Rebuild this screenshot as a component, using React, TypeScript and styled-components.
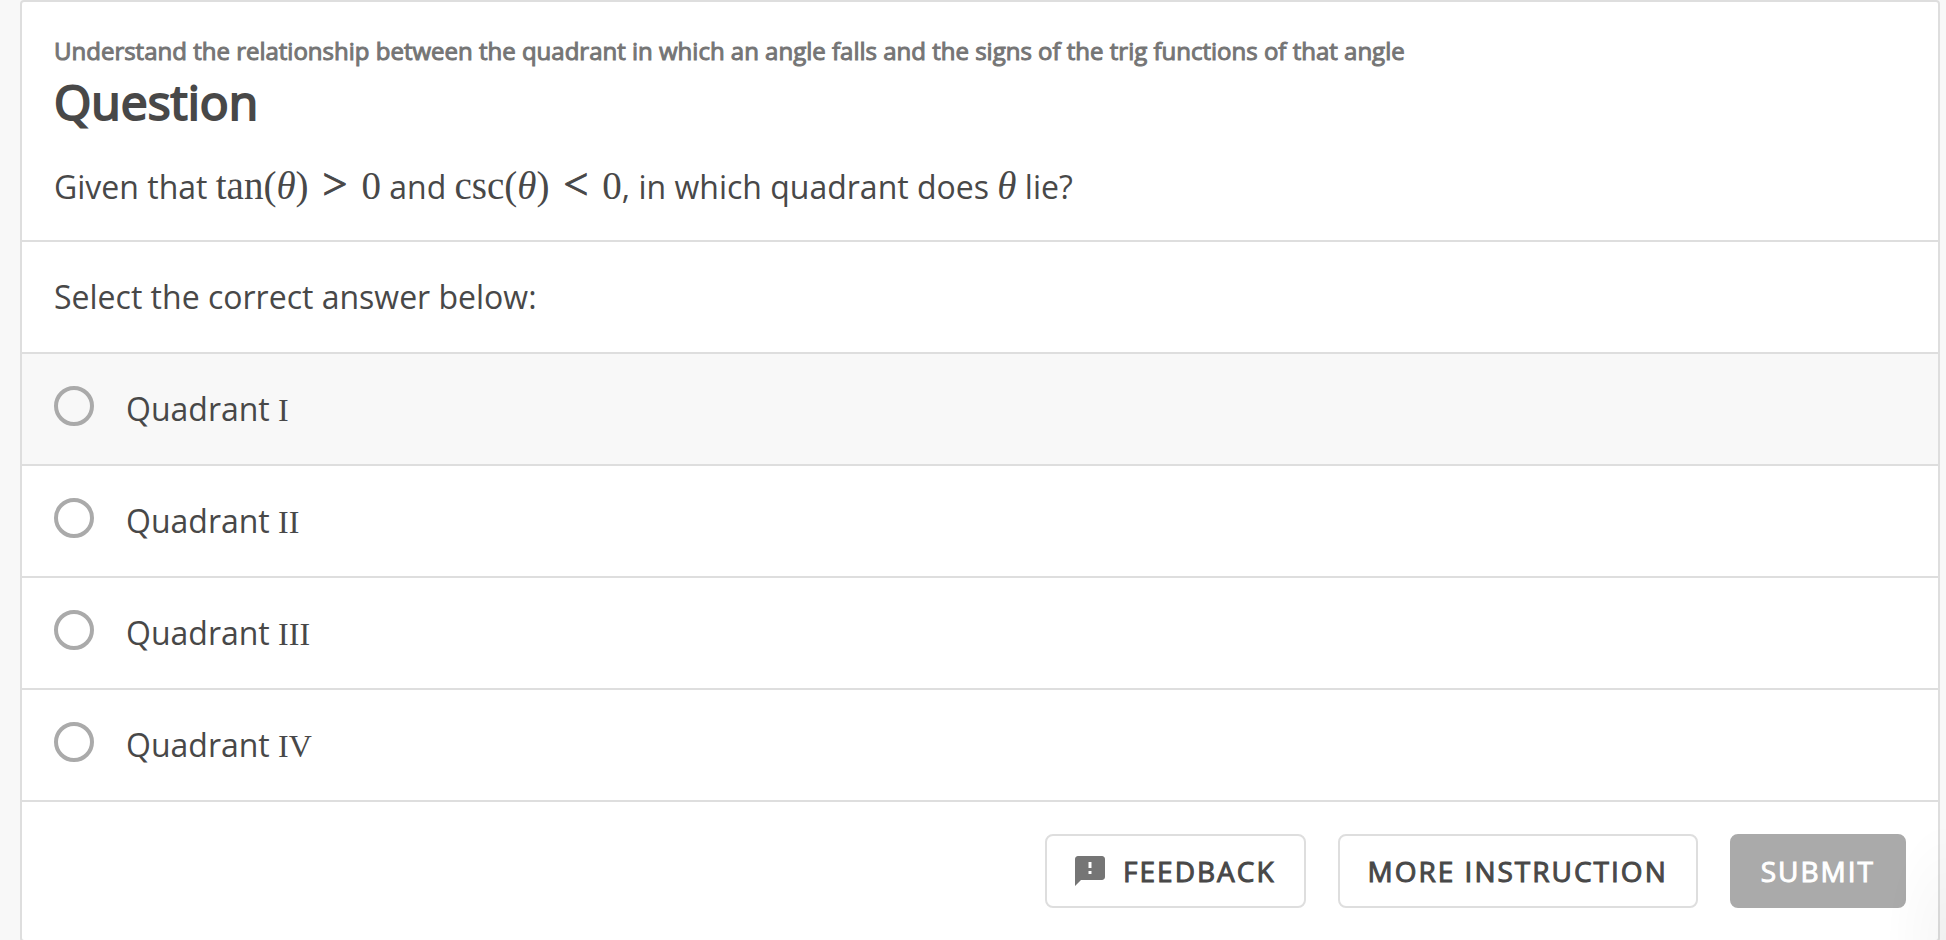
import React, { useState } from "react";
import styled, { createGlobalStyle } from "styled-components";

const colors = {
  page: "#f8f8f8",
  card: "#ffffff",
  line: "#dedede",
  text: "#484848",
  muted: "#757575",
  control: "#aaaaaa",
};

const GlobalStyle = createGlobalStyle`
  *, *::before, *::after { box-sizing: border-box; }
  body {
    margin: 0;
    background: ${colors.page};
    color: ${colors.text};
    font-family: "Open Sans", "Liberation Sans", sans-serif;
    font-size: 32px;
    line-height: 46px;
  }
`;

const Page = styled.div`
  height: 100vh;
  overflow: hidden;
  padding: 0 6px 0 20px;
`;

const Card = styled.form`
  background: ${colors.card};
  border: 2px solid ${colors.line};
  border-radius: 4px;
`;

const Header = styled.header`
  padding: 32px 32px 30px;
  border-bottom: 2px solid ${colors.line};
`;

const Objective = styled.p`
  margin: 0;
  color: ${colors.muted};
  font-size: 24px;
  line-height: 34px;
  -webkit-text-stroke: 1px currentColor;
`;

const Title = styled.h1`
  margin: 0 0 28px;
  font-size: 48px;
  line-height: 68px;
  font-weight: 400;
  -webkit-text-stroke: 2px currentColor;
`;

const Prompt = styled.p`
  margin: 0;
`;

const MathText = styled.span`
  font-family: "Liberation Serif", serif;
  font-size: 39px;
  line-height: 1;
  white-space: nowrap;
`;

const Relation = styled.span`
  margin: 0 14px;
  font-size: 44px;
  line-height: 32px;
  -webkit-text-stroke: 1px currentColor;
`;

const Numeral = styled.span`
  font-family: "Liberation Serif", serif;
  line-height: 1;
`;

const Choices = styled.fieldset`
  margin: 0;
  padding: 0;
  border: 0;
  min-width: 0;
`;

const Instruction = styled.legend`
  display: block;
  width: 100%;
  padding: 32px;
  border-bottom: 2px solid ${colors.line};
`;

const Choice = styled.label<{ $active: boolean }>`
  display: flex;
  align-items: flex-start;
  gap: 32px;
  padding: 32px;
  border-bottom: 2px solid ${colors.line};
  background: ${(p) => (p.$active ? "#f8f8f8" : colors.card)};
  cursor: pointer;
`;

const Radio = styled.input`
  appearance: none;
  flex: none;
  width: 40px;
  height: 40px;
  margin: 0;
  border: 4px solid ${colors.control};
  border-radius: 50%;
  background: transparent;

  &:checked {
    background: radial-gradient(circle, ${colors.text} 8px, transparent 9px);
  }
`;

const Footer = styled.footer`
  display: flex;
  justify-content: flex-end;
  gap: 32px;
  padding: 32px;
`;

const Button = styled.button<{ $filled?: boolean }>`
  display: inline-flex;
  align-items: center;
  gap: 18px;
  height: 74px;
  padding: 0 ${(p) => (p.$filled ? "29px" : "28px")};
  border: 2px solid ${(p) => (p.$filled ? colors.control : colors.line)};
  border-radius: 8px;
  background: ${(p) => (p.$filled ? colors.control : colors.card)};
  color: ${(p) => (p.$filled ? "#ffffff" : colors.text)};
  font-family: inherit;
  font-size: 28px;
  letter-spacing: 2px;
  white-space: nowrap;
  -webkit-text-stroke: 1px currentColor;
`;

const FeedbackIcon = styled.svg`
  flex: none;
  width: 30px;
  height: 30px;
  fill: ${colors.muted};
  stroke: none;
`;

const CornerShade = styled.div`
  position: fixed;
  right: 0;
  bottom: 0;
  width: 60px;
  height: 120px;
  pointer-events: none;
  background: radial-gradient(ellipse at bottom right, rgba(0, 0, 0, 0.03), transparent 70%);
`;

const options = ["I", "II", "III", "IV"];

function Comparison({ fn, sign }: { fn: string; sign: string }) {
  return (
    <MathText>
      {fn}(<i>θ</i>)<Relation>{sign}</Relation>0
    </MathText>
  );
}

export default function App() {
  const [selected, setSelected] = useState<string | null>(null);
  const [active, setActive] = useState("I");

  return (
    <>
      <GlobalStyle />
      <Page>
        <Card onSubmit={(e) => e.preventDefault()}>
          <Header>
            <Objective>
              Understand the relationship between the quadrant in which an angle falls and the
              signs of the trig functions of that angle
            </Objective>
            <Title>Question</Title>
            <Prompt>
              Given that <Comparison fn="tan" sign=">" /> and <Comparison fn="csc" sign="<" />, in
              which quadrant does{" "}
              <MathText>
                <i>θ</i>
              </MathText>{" "}
              lie?
            </Prompt>
          </Header>
          <Choices>
            <Instruction>Select the correct answer below:</Instruction>
            {options.map((numeral) => (
              <Choice
                key={numeral}
                $active={active === numeral}
                onMouseEnter={() => setActive(numeral)}
              >
                <Radio
                  type="radio"
                  name="quadrant"
                  value={numeral}
                  checked={selected === numeral}
                  onChange={() => setSelected(numeral)}
                />
                <span>
                  Quadrant <Numeral>{numeral}</Numeral>
                </span>
              </Choice>
            ))}
          </Choices>
          <Footer>
            <Button type="button">
              <FeedbackIcon viewBox="2 2 20 20" aria-hidden="true">
                <path d="M20 2H4c-1.1 0-1.99.9-1.99 2L2 22l4-4h14c1.1 0 2-.9 2-2V4c0-1.1-.9-2-2-2zm-7 12h-2v-2h2v2zm0-4h-2V6h2v4z" />
              </FeedbackIcon>
              FEEDBACK
            </Button>
            <Button type="button">MORE INSTRUCTION</Button>
            <Button type="submit" $filled disabled={selected === null}>
              SUBMIT
            </Button>
          </Footer>
        </Card>
      </Page>
      <CornerShade />
    </>
  );
}
